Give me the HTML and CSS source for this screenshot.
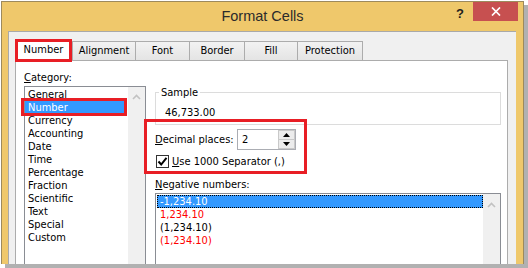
FILE: index.html
```html
<!DOCTYPE html>
<html>
<head>
<meta charset="utf-8">
<link rel="stylesheet" href="styles.css">
</head>
<body>
<div class="window">
  <div class="titlebar">
    <div></div>
    <div class="title">Format Cells</div>
    <div class="controls">
      <span class="help">?</span>
      <span class="close"><svg width="10" height="9" viewBox="0 0 10 9"><path d="M1 0.5 L9 8.5 M9 0.5 L1 8.5" stroke="#fff" stroke-width="1.7" fill="none"/></svg></span>
    </div>
  </div>
  <div class="client">
    <div class="tabs">
      <div class="tab active">Number</div>
      <div class="tab t-align">Alignment</div>
      <div class="tab t-font">Font</div>
      <div class="tab t-border">Border</div>
      <div class="tab t-fill">Fill</div>
      <div class="tab t-prot">Protection</div>
    </div>
    <div class="panel">
      <div class="col-left">
        <div class="label"><u>C</u>ategory:</div>
        <div class="listbox cat">
          <div class="items">
            <div class="item">General</div>
            <div class="item sel">Number</div>
            <div class="item">Currency</div>
            <div class="item">Accounting</div>
            <div class="item">Date</div>
            <div class="item">Time</div>
            <div class="item">Percentage</div>
            <div class="item">Fraction</div>
            <div class="item">Scientific</div>
            <div class="item">Text</div>
            <div class="item">Special</div>
            <div class="item">Custom</div>
          </div>
          <div class="vscroll"><svg width="9" height="6" viewBox="0 0 9 6"><path d="M1 5 L4.5 1.5 L8 5" stroke="#c2c2c2" stroke-width="1.6" fill="none"/></svg></div>
        </div>
      </div>
      <div class="col-right">
        <fieldset class="sample">
          <legend>Sample</legend>
          <div class="sample-val">46,733.00</div>
        </fieldset>
        <div class="row dec">
          <div class="dec-label"><u>D</u>ecimal places:</div>
          <div class="spin">
            <div class="spin-val">2</div>
            <div class="spin-btns">
              <div class="spin-btn"><svg width="7" height="4" viewBox="0 0 7 4"><path d="M0 4 L3.5 0 L7 4 Z" fill="#000"/></svg></div>
              <div class="spin-btn"><svg width="7" height="4" viewBox="0 0 7 4"><path d="M0 0 L7 0 L3.5 4 Z" fill="#000"/></svg></div>
            </div>
          </div>
        </div>
        <div class="row chk">
          <span class="checkbox"><svg width="11" height="11" viewBox="0 0 11 11"><path d="M1.5 5.5 L4.2 8.5 L9.5 1.8" stroke="#000" stroke-width="2" fill="none"/></svg></span>
          <span><u>U</u>se 1000 Separator (,)</span>
        </div>
        <div class="label neg-label"><u>N</u>egative numbers:</div>
        <div class="listbox neg">
          <div class="items">
            <div class="item sel">-1,234.10</div>
            <div class="item red">1,234.10</div>
            <div class="item">(1,234.10)</div>
            <div class="item red">(1,234.10)</div>
          </div>
          <div class="vscroll"><svg width="9" height="6" viewBox="0 0 9 6"><path d="M1 5 L4.5 1.5 L8 5" stroke="#c2c2c2" stroke-width="1.6" fill="none"/></svg></div>
        </div>
      </div>
    </div>
  </div>
</div>
<div class="mark mark-tab"></div>
<div class="mark mark-cat"></div>
<div class="mark mark-dec"></div>
</body>
</html>
```
FILE: styles.css
```css
html, body {
  margin: 0;
  padding: 0;
}
body {
  width: 528px;
  height: 268px;
  overflow: hidden;
  position: relative;
  background: #ffffff;
  font-family: "DejaVu Sans Condensed", "Liberation Sans", sans-serif;
  font-size: 11px;
  color: #000;
}
.window {
  margin: 1px 0 0 1px;
  width: 523px;
  height: 263px;
  box-sizing: border-box;
  border: 1px solid #9d8a5c;
  border-bottom: 0;
  background: #efc86b;
  display: flex;
  flex-direction: column;
  box-shadow: 4px 4px 0 #b1b1b1;
  overflow: hidden;
}
.titlebar {
  flex: none;
  height: 29px;
  display: grid;
  grid-template-columns: 1fr auto 1fr;
}
.title {
  font-family: "Liberation Sans", sans-serif;
  font-size: 14.5px;
  line-height: 28px;
  color: #2b2b2b;
}
.controls {
  display: flex;
  justify-content: flex-end;
  align-items: flex-start;
  padding-right: 5px;
}
.help {
  font-family: "Liberation Sans", sans-serif;
  font-weight: bold;
  font-size: 13px;
  line-height: 15px;
  margin-top: 4px;
  margin-right: 9px;
  color: #1e1e1e;
}
.close {
  width: 45px;
  height: 19px;
  background: #c75050;
  display: flex;
  align-items: center;
  justify-content: center;
}
.client {
  flex: 1;
  min-height: 0;
  margin: 0 7px 0 6px;
  background: #f0f0f0;
  border-left: 1px solid #a9a9a9;
  border-top: 1px solid #a9a9a9;
  padding: 7px 0 0 6px;
  display: flex;
  flex-direction: column;
}
.tabs {
  flex: none;
  height: 21px;
  display: flex;
  align-items: flex-end;
}
.tab {
  box-sizing: border-box;
  height: 19px;
  border: 1px solid #acacac;
  border-bottom: 0;
  background: linear-gradient(#f2f2f2, #e4e4e4);
  margin-left: -1px;
  text-align: center;
  line-height: 18px;
  white-space: nowrap;
}
.tab.active {
  width: 57px;
  height: 22px;
  margin-left: 0;
  margin-bottom: -1px;
  background: #fff;
  line-height: 20px;
  position: relative;
  z-index: 1;
}
.t-align { width: 64px; margin-left: 0; }
.t-font { width: 55px; }
.t-border { width: 56px; }
.t-fill { width: 54px; }
.t-prot { width: 66px; }
.panel {
  flex: 1;
  width: 493px;
  box-sizing: border-box;
  background: #fff;
  border: 1px solid #acacac;
  padding: 9px 0 0 8px;
  display: flex;
  gap: 9px;
}
.col-left {
  width: 122px;
  flex: none;
}
.col-right {
  width: 346px;
  flex: none;
}
.label {
  height: 15px;
  line-height: 15px;
  white-space: nowrap;
}
.listbox {
  box-sizing: border-box;
  border: 1px solid #8a8d94;
  display: flex;
  margin-top: 1px;
  height: 200px;
}
.listbox .items {
  flex: 1;
  padding-top: 1px;
}
.item {
  height: 13px;
  line-height: 13px;
  padding-left: 3px;
  white-space: nowrap;
}
.item.sel {
  background: #3399ff;
  color: #fff;
}
.cat .item.sel {
  margin-right: 3px;
}
.neg .items {
  padding-left: 1px;
}
.neg .item.sel {
  box-sizing: border-box;
  border: 1px dotted #000;
  line-height: 11px;
  padding-left: 2px;
}
.item.red {
  color: #ff0000;
}
.vscroll {
  flex: none;
  width: 17px;
  background: #f0f0f0;
  display: flex;
  justify-content: center;
  align-items: flex-start;
  padding-top: 7px;
  box-sizing: border-box;
}
.neg .vscroll {
  padding-top: 8px;
}
.sample {
  margin: 15px 0 0 0;
  padding: 6px 0 5px 9px;
  border: 1px solid #dcdcdc;
  min-width: 0;
}
.sample legend {
  padding: 0 2px;
  margin-left: -6px;
  line-height: 15px;
}
.sample-val {
  line-height: 13px;
  height: 13px;
}
.row {
  display: flex;
  align-items: center;
}
.dec {
  margin-top: 4px;
  height: 21px;
}
.dec-label {
  width: 82px;
  white-space: nowrap;
}
.spin {
  box-sizing: border-box;
  width: 59px;
  height: 21px;
  border: 1px solid #abadb3;
  display: flex;
}
.spin-val {
  flex: 1;
  padding-left: 4px;
  line-height: 19px;
}
.spin-btns {
  width: 17px;
  display: flex;
  flex-direction: column;
}
.spin-btn {
  flex: 1;
  box-sizing: border-box;
  border: 1px solid #c9c9c9;
  background: #ececec;
  display: flex;
  align-items: center;
  justify-content: center;
}
.spin-btn + .spin-btn {
  border-top: 0;
}
.chk {
  margin-top: 5px;
  height: 13px;
  gap: 3px;
  white-space: nowrap;
}
.checkbox {
  box-sizing: border-box;
  width: 13px;
  height: 13px;
  margin-left: 1px;
  border: 1px solid #333;
  background: #fff;
  display: flex;
  align-items: center;
  justify-content: center;
}
.neg-label {
  margin-top: 9px;
}
.mark {
  position: absolute;
  box-sizing: border-box;
  border: 3px solid #e81e25;
  z-index: 5;
}
.mark-tab {
  left: 15px;
  top: 39px;
  width: 57px;
  height: 23px;
}
.mark-cat {
  left: 21px;
  top: 98px;
  width: 106px;
  height: 18px;
}
.mark-dec {
  left: 144px;
  top: 119px;
  width: 163px;
  height: 55px;
}
```
